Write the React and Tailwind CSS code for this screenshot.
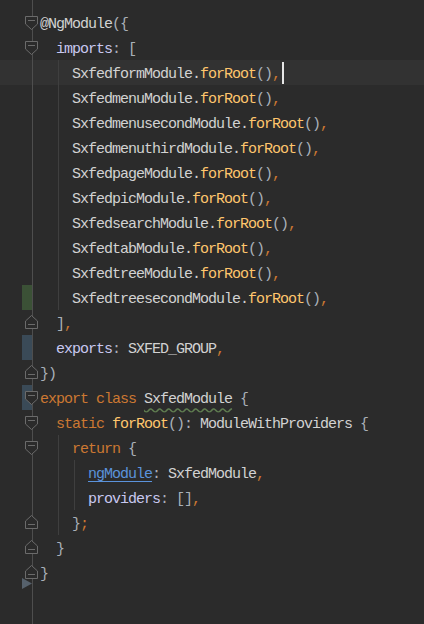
import React from 'react';

// token colours (Darcula-ish)
const T = 'text-[#d2d2d2]';
const P = 'text-[#a9b0b8]';
const K = 'text-[#cc7832]';
const F = 'text-[#ffc66d]';
const PR = 'text-[#c8c8f0]';

const modules = [
  'Sxfedform', 'Sxfedmenu', 'Sxfedmenusecond', 'Sxfedmenuthird', 'Sxfedpage',
  'Sxfedpic', 'Sxfedsearch', 'Sxfedtab', 'Sxfedtree', 'Sxfedtreesecond',
];

const FoldOpen = () => (
  <svg width="13" height="14" viewBox="0 0 13 14" className="absolute left-[25px] top-[6px]">
    <path d="M0.5 0.5H12.5V8L6.5 13.5L0.5 8Z" fill="#2b2b2b" stroke="#6b6b6b" />
    <path d="M3 4.5H10" stroke="#6b6b6b" />
  </svg>
);

const FoldClose = () => (
  <svg width="13" height="14" viewBox="0 0 13 14" className="absolute left-[25px] top-[5px]">
    <path d="M6.5 0.5L12.5 6V13.5H0.5V6Z" fill="#2b2b2b" stroke="#6b6b6b" />
    <path d="M3 9.5H10" stroke="#6b6b6b" />
  </svg>
);

const Gutter = ({ fold, vcs }) => (
  <div className="relative w-[40px] shrink-0">
    {vcs === 'add' && <div className="absolute left-[22px] top-0 bottom-0 w-[10px] bg-[#3b5136]" />}
    {vcs === 'mod' && <div className="absolute left-[22px] top-0 bottom-0 w-[10px] bg-[#3a4a57]" />}
    <div className="absolute left-[32px] top-0 bottom-0 w-px bg-[#4e4e4e]" />
    {fold === 'open' && <FoldOpen />}
    {fold === 'close' && <FoldClose />}
  </div>
);

// indentation with guide lines
const Indent = ({ level, guides = 0 }) => {
  if (level === 0) return null;
  if (level === 1) return <span className="w-[16px] shrink-0" />;
  if (level === 2) {
    return (
      <>
        <span className="w-[18px] shrink-0" />
        <span className={`w-[14px] shrink-0 ${guides >= 1 ? 'border-l border-[#3f3f3f]' : ''}`} />
      </>
    );
  }
  return (
    <>
      <span className="w-[18px] shrink-0" />
      <span className="w-[16px] shrink-0 border-l border-[#3f3f3f]" />
      <span className="w-[14px] shrink-0 border-l border-[#3f3f3f]" />
    </>
  );
};

const Line = ({ fold, vcs, level = 0, guides = 0, current, children }) => (
  <div className={`flex h-[25px] ${current ? 'bg-[#323232]' : ''}`}>
    <Gutter fold={fold} vcs={vcs} />
    <Indent level={level} guides={guides} />
    <span className="whitespace-pre leading-[25px] pt-[2px]">{children}</span>
  </div>
);

export default function App() {
  return (
    <div className="w-[424px] h-[624px] bg-[#2b2b2b] flex flex-col overflow-hidden font-['Liberation_Mono','DejaVu_Sans_Mono',monospace] text-[15px] tracking-[-1px]">
      <div className="flex h-[10px] shrink-0">
        <Gutter />
      </div>

      <Line fold="open">
        <span className={T}>@NgModule</span><span className={P}>({"{"}</span>
      </Line>
      <Line fold="open" level={1}>
        <span className={PR}>imports</span><span className={P}>: [</span>
      </Line>
      {modules.map((m, i) => (
        <Line key={m} level={2} guides={1} current={i === 0} vcs={i === 9 ? 'add' : undefined}>
          <span className={T}>{m}Module.</span>
          <span className={F}>forRoot</span>
          <span className={P}>()</span>
          <span className={K}>,</span>
          {i === 0 && <span className="inline-block w-[2px] h-[22px] bg-[#e6e6e6] align-middle ml-[2px] -mt-[2px]" />}
        </Line>
      ))}
      <Line fold="close" level={1}>
        <span className={P}>]</span><span className={K}>,</span>
      </Line>
      <Line vcs="mod" level={1}>
        <span className={PR}>exports</span><span className={P}>: </span>
        <span className={T}>SXFED_GROUP</span><span className={K}>,</span>
      </Line>
      <Line fold="close">
        <span className={P}>{"})"}</span>
      </Line>
      <Line fold="open" vcs="mod">
        <span className={K}>export class </span>
        <span className={`${T} underline decoration-wavy decoration-[#5f7d50] underline-offset-[4px]`}>SxfedModule</span>
        <span className={P}> {"{"}</span>
      </Line>
      <Line fold="open" level={1}>
        <span className={K}>static </span>
        <span className={F}>forRoot</span>
        <span className={P}>(): </span>
        <span className={T}>ModuleWithProviders</span>
        <span className={P}> {"{"}</span>
      </Line>
      <Line fold="open" level={2} guides={1}>
        <span className={K}>return </span><span className={P}>{"{"}</span>
      </Line>
      <Line level={3}>
        <span className="text-[#5b93dc] underline decoration-[#5b93dc] underline-offset-[3px]">ngModule</span>
        <span className={P}>: </span>
        <span className={T}>SxfedModule</span>
        <span className={K}>,</span>
      </Line>
      <Line level={3}>
        <span className={PR}>providers</span><span className={P}>: []</span><span className={K}>,</span>
      </Line>
      <Line fold="close" level={2} guides={1}>
        <span className={P}>{"}"}</span><span className={K}>;</span>
      </Line>
      <Line fold="close" level={1}>
        <span className={P}>{"}"}</span>
      </Line>
      <Line fold="close">
        <span className={P}>{"}"}</span>
      </Line>

      <div className="flex flex-1">
        <div className="relative w-[40px] shrink-0">
          <div className="absolute left-[32px] top-0 bottom-0 w-px bg-[#4e4e4e]" />
          <svg width="11" height="11" viewBox="0 0 11 11" className="absolute left-[22px] top-[-7px]">
            <path d="M0 0L10 5.5L0 11Z" fill="#56616c" />
          </svg>
        </div>
      </div>
    </div>
  );
}
